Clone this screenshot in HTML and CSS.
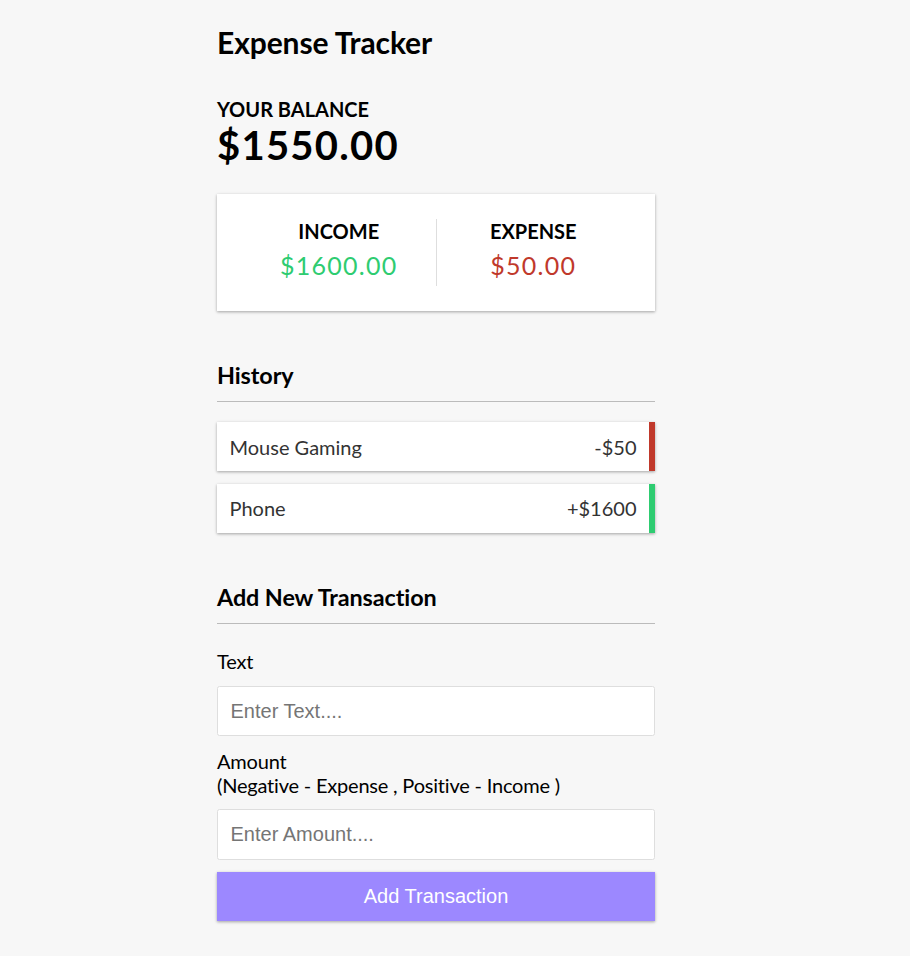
FILE: index.html
```html
<!DOCTYPE html>
<html lang="en">
<head>
<meta charset="UTF-8">
<title>Expense Tracker</title>
<link rel="stylesheet" href="styles.css">
</head>
<body>
  <div class="container">
    <h2 class="title">Expense Tracker</h2>

    <h4 class="balance-label">Your Balance</h4>
    <h1 class="balance">$1550.00</h1>

    <div class="inc-exp-container">
      <div class="inc-exp-col">
        <h4 class="inc-exp-label">Income</h4>
        <p class="money plus">$1600.00</p>
      </div>
      <div class="inc-exp-col">
        <h4 class="inc-exp-label">Expense</h4>
        <p class="money minus">$50.00</p>
      </div>
    </div>

    <h3 class="section-title">History</h3>
    <ul class="list">
      <li class="list-item minus">Mouse Gaming <span>-$50</span></li>
      <li class="list-item plus">Phone <span>+$1600</span></li>
    </ul>

    <h3 class="section-title">Add New Transaction</h3>
    <form class="form">
      <div class="form-control">
        <label class="form-label" for="text">Text</label>
        <input class="form-input" type="text" id="text" placeholder="Enter Text....">
      </div>
      <div class="form-control">
        <label class="form-label" for="amount">Amount <br>(Negative - Expense , Positive - Income )</label>
        <input class="form-input" type="text" id="amount" placeholder="Enter Amount....">
      </div>
      <button class="btn" type="button">Add Transaction</button>
    </form>
  </div>
</body>
</html>
```

FILE: styles.css
```css
* {
  box-sizing: border-box;
}

html {
  background-color: #ffffff;
}

body {
  margin: 0;
  height: 956px;
  background-color: #f7f7f7;
  font-family: "Lato", "Noto Sans", sans-serif;
  color: #000;
}

.container {
  width: 438px;
  margin-left: 217px;
  padding-top: 24px;
}

.title {
  font-size: 30px;
  line-height: 36px;
  font-weight: 700;
  letter-spacing: -0.1px;
  margin: 0 0 37.3px;
}

.balance-label {
  font-size: 20px;
  line-height: 24px;
  font-weight: 700;
  text-transform: uppercase;
  margin: 0;
}

.balance {
  font-size: 40px;
  line-height: 48px;
  font-weight: 700;
  letter-spacing: 1.25px;
  margin: 0;
}

.inc-exp-container {
  background-color: #fff;
  box-shadow: 0 1.25px 3.75px rgba(0, 0, 0, 0.12), 0 1.25px 2.5px rgba(0, 0, 0, 0.24);
  padding: 25px;
  display: flex;
  justify-content: space-between;
  margin: 25px 0;
}

.inc-exp-col {
  flex: 1;
  text-align: center;
}

.inc-exp-col:first-child {
  border-right: 1px solid #dedede;
}

.inc-exp-label {
  font-size: 20px;
  line-height: 24px;
  font-weight: 700;
  text-transform: uppercase;
  margin: 0;
}

.money {
  font-size: 25px;
  line-height: 30px;
  letter-spacing: 1.25px;
  margin: 6.25px 0;
}

.money.plus {
  color: #2ecc71;
}

.money.minus {
  color: #c0392b;
}

.section-title {
  font-size: 23.4px;
  line-height: 28.1px;
  font-weight: 700;
  letter-spacing: -0.1px;
  border-bottom: 1.25px solid #bbb;
  padding-bottom: 12.5px;
  margin: 50px 0 12.5px;
}

.list {
  list-style: none;
  padding: 0;
  margin: 20px 0 0;
  display: flex;
  flex-direction: column;
  gap: 12.5px;
}

.list-item {
  background-color: #fff;
  box-shadow: 0 1.25px 3.75px rgba(0, 0, 0, 0.12), 0 1.25px 2.5px rgba(0, 0, 0, 0.24);
  color: #333;
  display: flex;
  justify-content: space-between;
  padding: 12.5px;
  font-size: 20px;
  line-height: 24px;
}

.list-item.plus {
  border-right: 6px solid #2ecc71;
}

.list-item.minus {
  border-right: 6px solid #c0392b;
}

.form {
  margin: 0;
}

.form-control {
  font-size: 20px;
  line-height: 24px;
}

.form-label {
  display: inline-block;
  margin: 12.5px 0;
  letter-spacing: -0.2px;
}

.form-input {
  display: block;
  width: 100%;
  height: 50.5px;
  border: 1px solid #dedede;
  border-radius: 2.5px;
  background: #fff;
  font-family: "Liberation Sans", Arial, sans-serif;
  font-size: 20px;
  padding: 0 12.5px;
  color: #000;
}

.form-input::placeholder {
  color: #757575;
}

.btn {
  display: block;
  width: 100%;
  height: 48.5px;
  margin: 12.5px 0 37.5px;
  border: 0;
  background-color: #9c88ff;
  box-shadow: 0 1.25px 3.75px rgba(0, 0, 0, 0.12), 0 1.25px 2.5px rgba(0, 0, 0, 0.24);
  color: #fff;
  font-family: "Liberation Sans", Arial, sans-serif;
  font-size: 20px;
  cursor: pointer;
}
```
